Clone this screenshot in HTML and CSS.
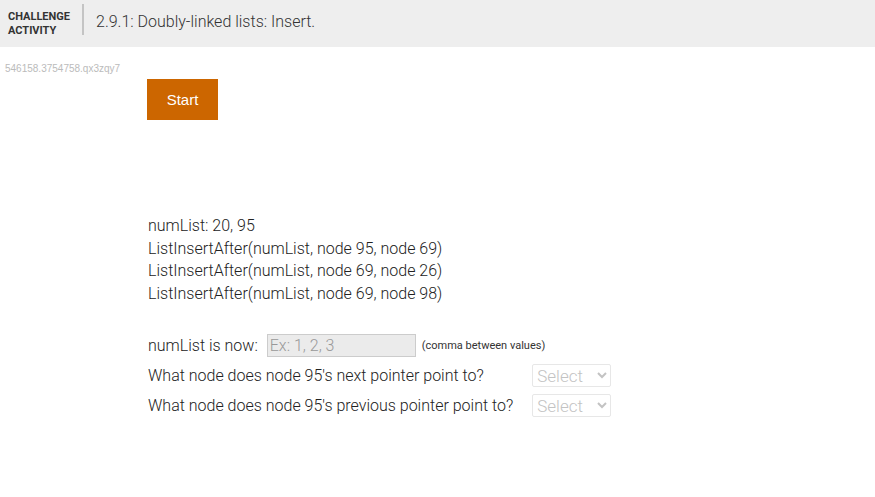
FILE: index.html
```html
<!DOCTYPE html>
<html>
<head>
<meta charset="utf-8">
<link rel="stylesheet" href="styles.css">
</head>
<body>
<header class="header">
  <div class="label">CHALLENGE<br>ACTIVITY</div>
  <div class="divider"></div>
  <div class="title">2.9.1: Doubly-linked lists: Insert.</div>
</header>
<div class="seed">546158.3754758.qx3zqy7</div>
<main class="content">
  <button class="start">Start</button>
  <div class="program">
    <div>numList: 20, 95</div>
    <div>ListInsertAfter(numList, node 95, node 69)</div>
    <div>ListInsertAfter(numList, node 69, node 26)</div>
    <div>ListInsertAfter(numList, node 69, node 98)</div>
  </div>
  <div class="answer-row">
    <span class="q">numList is now:</span>
    <input class="list-input" type="text" placeholder="Ex: 1, 2, 3" disabled>
    <span class="hint">(comma between values)</span>
  </div>
  <div class="qgrid">
    <span class="q">What node does node 95's next pointer point to?</span>
    <select class="sel" disabled><option>Select</option></select>
    <span class="q">What node does node 95's previous pointer point to?</span>
    <select class="sel" disabled><option>Select</option></select>
  </div>
</main>
</body>
</html>
```
FILE: styles.css
```css
html, body {
  margin: 0;
  padding: 0;
  background: #fff;
  font-family: Roboto, "Liberation Sans", sans-serif;
  color: #333;
}
.header {
  display: flex;
  align-items: center;
  height: 47px;
  background: #eeeeee;
  padding-left: 8px;
  box-sizing: border-box;
}
.label {
  font-size: 11px;
  font-weight: 700;
  line-height: 14px;
  color: #333;
}
.divider {
  width: 2px;
  height: 31px;
  background: #c4c4c4;
  margin-left: 12px;
  margin-right: 12px;
  margin-top: -9px;
}
.title {
  font-size: 16px;
  font-weight: 300;
  color: #333;
  margin-top: -5px;
}
.seed {
  font-family: "Liberation Sans", Arial, sans-serif;
  font-size: 10px;
  color: #bbb;
  margin: 17px 0 0 5px;
  line-height: 10px;
}
.content {
  padding-left: 147px;
}
.start {
  display: block;
  margin-top: 5px;
  width: 71px;
  height: 41px;
  background: #cc6600;
  color: #fff;
  border: none;
  font-family: "Liberation Sans", Arial, sans-serif;
  font-size: 15px;
  padding: 0;
}
.program {
  margin-top: 95px;
  font-size: 16px;
  font-weight: 300;
  line-height: 22.5px;
  color: #222;
  padding-left: 1px;
}
.answer-row {
  display: flex;
  align-items: center;
  margin-top: 29px;
  padding-left: 1px;
}
.q {
  font-size: 16px;
  font-weight: 300;
  color: #222;
}
.list-input {
  margin-left: 9px;
  width: 149px;
  height: 23px;
  box-sizing: border-box;
  border: 1px solid #ccc;
  background: #ebebeb;
  font-family: Roboto, sans-serif;
  font-weight: 300;
  font-size: 16px;
  padding: 0 2px;
}
.list-input::placeholder {
  color: #999;
}
.hint {
  font-size: 11px;
  margin-left: 6px;
  color: #333;
}
.qgrid {
  display: grid;
  grid-template-columns: max-content max-content;
  column-gap: 19px;
  row-gap: 7px;
  align-items: center;
  margin-top: 7px;
  padding-left: 1px;
}
.sel {
  width: 79px;
  height: 23px;
  border: 1px solid #ddd;
  border-radius: 2px;
  background: #fff;
  color: #aaa;
  font-family: Roboto, sans-serif;
  font-weight: 300;
  font-size: 17px;
}
```
